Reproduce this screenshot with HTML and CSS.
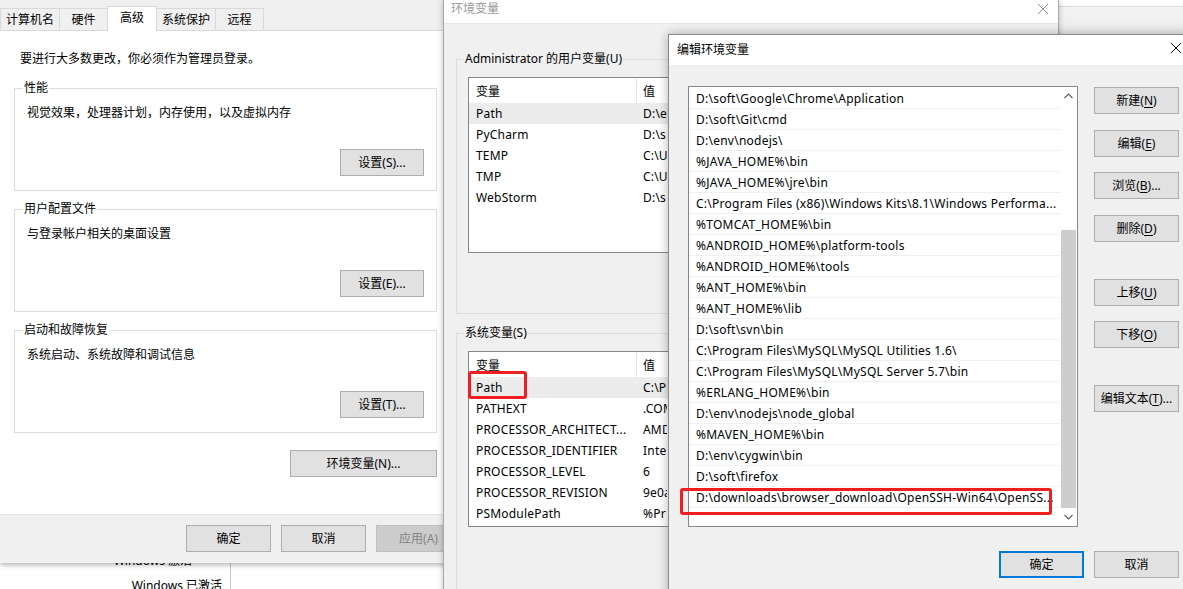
FILE: index.html
```html
<!DOCTYPE html>
<html lang="zh-CN">
<head>
<meta charset="utf-8">
<title>环境变量</title>
<link rel="stylesheet" href="styles.css">
</head>
<body>
<div class="desktop">

  <div class="backwin">
    <div class="backpane">
      <div class="act-title">Windows 激活</div>
      <div class="act-state">Windows 已激活</div>
    </div>
  </div>
  <div class="backstrip"></div>

  <section class="win sys">
    <div class="tabs">
      <div class="tab">计算机名</div>
      <div class="tab">硬件</div>
      <div class="tab active">高级</div>
      <div class="tab">系统保护</div>
      <div class="tab">远程</div>
    </div>
    <div class="panel">
      <div class="panel-inner">
        <p class="note">要进行大多数更改，你必须作为管理员登录。</p>
        <div class="group">
          <span class="legend">性能</span>
          <p class="desc">视觉效果，处理器计划，内存使用，以及虚拟内存</p>
          <button class="btn set">设置(S)...</button>
        </div>
        <div class="group">
          <span class="legend">用户配置文件</span>
          <p class="desc">与登录帐户相关的桌面设置</p>
          <button class="btn set">设置(E)...</button>
        </div>
        <div class="group">
          <span class="legend">启动和故障恢复</span>
          <p class="desc">系统启动、系统故障和调试信息</p>
          <button class="btn set">设置(T)...</button>
        </div>
        <button class="btn envbtn">环境变量(N)...</button>
      </div>
    </div>
    <div class="footer">
      <button class="btn">确定</button>
      <button class="btn">取消</button>
      <button class="btn disabled">应用(A)</button>
    </div>
  </section>

  <section class="win env">
    <div class="titlebar">
      <span class="title">环境变量</span>
      <span class="close"><svg width="10" height="10" viewBox="0 0 10 10"><path d="M0 0L10 10M10 0L0 10" stroke="#8a8a8a" stroke-width="1" fill="none"/></svg></span>
    </div>
    <div class="env-body">
      <div class="vgroup">
        <span class="legend">Administrator 的用户变量(U)</span>
        <div class="listview">
          <div class="lv-head"><span class="c1">变量</span><span class="c2">值</span></div>
          <div class="lv-row sel"><span class="c1">Path</span><span class="c2">D:\e</span></div>
          <div class="lv-row"><span class="c1">PyCharm</span><span class="c2">D:\s</span></div>
          <div class="lv-row"><span class="c1">TEMP</span><span class="c2">C:\U</span></div>
          <div class="lv-row"><span class="c1">TMP</span><span class="c2">C:\U</span></div>
          <div class="lv-row"><span class="c1">WebStorm</span><span class="c2">D:\s</span></div>
        </div>
      </div>
      <div class="vgroup second">
        <span class="legend">系统变量(S)</span>
        <div class="listview">
          <div class="lv-head"><span class="c1">变量</span><span class="c2">值</span></div>
          <div class="lv-row sel"><span class="c1">Path</span><span class="c2">C:\Pr</span></div>
          <div class="lv-row"><span class="c1">PATHEXT</span><span class="c2">.COM</span></div>
          <div class="lv-row"><span class="c1">PROCESSOR_ARCHITECT...</span><span class="c2">AMD</span></div>
          <div class="lv-row"><span class="c1">PROCESSOR_IDENTIFIER</span><span class="c2">Intel</span></div>
          <div class="lv-row"><span class="c1">PROCESSOR_LEVEL</span><span class="c2">6</span></div>
          <div class="lv-row"><span class="c1">PROCESSOR_REVISION</span><span class="c2">9e0a</span></div>
          <div class="lv-row"><span class="c1">PSModulePath</span><span class="c2">%Pr</span></div>
        </div>
      </div>
    </div>
  </section>

  <section class="win edit">
    <div class="titlebar">
      <span class="title">编辑环境变量</span>
      <span class="close"><svg width="10" height="10" viewBox="0 0 10 10"><path d="M0 0L10 10M10 0L0 10" stroke="#000" stroke-width="1" fill="none"/></svg></span>
    </div>
    <div class="edit-body">
      <div class="pathlist">
        <div class="items">
          <div class="item">D:\soft\Google\Chrome\Application</div>
          <div class="item">D:\soft\Git\cmd</div>
          <div class="item">D:\env\nodejs\</div>
          <div class="item">%JAVA_HOME%\bin</div>
          <div class="item">%JAVA_HOME%\jre\bin</div>
          <div class="item">C:\Program Files (x86)\Windows Kits\8.1\Windows Performa...</div>
          <div class="item">%TOMCAT_HOME%\bin</div>
          <div class="item">%ANDROID_HOME%\platform-tools</div>
          <div class="item">%ANDROID_HOME%\tools</div>
          <div class="item">%ANT_HOME%\bin</div>
          <div class="item">%ANT_HOME%\lib</div>
          <div class="item">D:\soft\svn\bin</div>
          <div class="item">C:\Program Files\MySQL\MySQL Utilities 1.6\</div>
          <div class="item">C:\Program Files\MySQL\MySQL Server 5.7\bin</div>
          <div class="item">%ERLANG_HOME%\bin</div>
          <div class="item">D:\env\nodejs\node_global</div>
          <div class="item">%MAVEN_HOME%\bin</div>
          <div class="item">D:\env\cygwin\bin</div>
          <div class="item">D:\soft\firefox</div>
          <div class="item">D:\downloads\browser_download\OpenSSH-Win64\OpenSS...</div>
        </div>
        <div class="vscroll">
          <div class="arrow"><svg width="9" height="6" viewBox="0 0 9 6"><polyline points="0.5,5 4.5,1 8.5,5" fill="none" stroke="#606060" stroke-width="1.2"/></svg></div>
          <div class="track"><div class="thumb"></div></div>
          <div class="arrow"><svg width="9" height="6" viewBox="0 0 9 6"><polyline points="0.5,1 4.5,5 8.5,1" fill="none" stroke="#606060" stroke-width="1.2"/></svg></div>
        </div>
      </div>
      <div class="side">
        <button class="btn">新建(<u>N</u>)</button>
        <button class="btn">编辑(<u>E</u>)</button>
        <button class="btn">浏览(<u>B</u>)...</button>
        <button class="btn">删除(<u>D</u>)</button>
        <button class="btn sep">上移(<u>U</u>)</button>
        <button class="btn">下移(<u>O</u>)</button>
        <button class="btn sep">编辑文本(<u>T</u>)...</button>
      </div>
      <div class="dlg-actions">
        <button class="btn default">确定</button>
        <button class="btn">取消</button>
      </div>
    </div>
  </section>

  <div class="mark mark-path"></div>
  <div class="mark mark-ssh"></div>
</div>
</body>
</html>
```

FILE: styles.css
```css
* { box-sizing: border-box; }
html, body { margin: 0; padding: 0; }
body {
  width: 1183px;
  height: 589px;
  overflow: hidden;
  background: #fff;
  font-family: "Noto Sans", "Noto Sans CJK SC", sans-serif;
  font-size: 12px;
  line-height: 16px;
  color: #000;
}
p { margin: 0; }

.desktop { position: relative; width: 1183px; height: 589px; overflow: hidden; }
.win { position: absolute; background: #f0f0f0; }

.btn {
  font: inherit;
  color: #000;
  background: #e1e1e1;
  border: 1px solid #adadad;
  height: 27px;
  width: 85px;
  padding: 1px 0 0;
  display: flex;
  align-items: center;
  justify-content: center;
  line-height: 16px;
  border-radius: 0;
  flex: none;
}
.btn u { text-decoration: underline; text-underline-offset: 2px; }
.btn.disabled { background: #cccccc; border-color: #bfbfbf; color: #838383; }
.btn.default { border: 2px solid #0078d7; }

/* background windows */
.backwin {
  position: absolute;
  left: 0; top: 548px;
  width: 443px; height: 50px;
  background: #fff;
}
.backpane {
  width: 231px; height: 100%;
  border-right: 1px solid #c8c8c8;
  padding-top: 5px;
  text-align: right;
}
.act-title { padding-right: 38px; }
.act-state { margin-top: 9px; padding-right: 8px; }
.backstrip {
  position: absolute;
  left: 1059px; top: 0;
  width: 124px; height: 34px;
  background: linear-gradient(#fff 0, #fff 6px, #dcdcdc 6px, #dcdcdc 7px, #f3f3f3 7px, #ececec 34px);
}

/* System properties window */
.sys {
  left: 0; top: 0;
  width: 470px; height: 563px;
  display: flex;
  flex-direction: column;
  z-index: 1;
  box-shadow: 0 2px 5px rgba(0,0,0,.3);
}
.tabs { display: flex; align-items: flex-end; height: 30px; flex: none; }
.tab {
  height: 22px;
  min-width: 49px;
  padding: 1px 5px 0;
  border: 1px solid #d9d9d9;
  border-bottom: none;
  margin-right: -1px;
  line-height: 19px;
  text-align: center;
  background: #f0f0f0;
}
.tab.active {
  height: 25px;
  background: #fff;
  margin: 0 -1px -1px 0;
  padding: 0 12px;
  line-height: 22px;
  position: relative;
  z-index: 1;
}
.panel {
  flex: 1;
  background: #fff;
  border-top: 1px solid #d9d9d9;
  padding-left: 14px;
}
.panel-inner { width: 423px; display: flex; flex-direction: column; }
.note { margin: 20px 0 0 6px; }
.group {
  margin-top: 18px;
  height: 103px;
  border: 1px solid #dcdcdc;
  display: flex;
  flex-direction: column;
  background: #fff;
}
.note + .group { margin-top: 21px; }
.legend {
  align-self: flex-start;
  margin: -9px 0 0 8px;
  padding: 0 1px;
  background: inherit;
}
.desc { margin: 9px 0 0 12px; }
.group .btn.set { margin: auto 12px 14px auto; width: 84px; }
.envbtn { margin-top: 17px; align-self: flex-end; width: 147px; }
.footer {
  height: 49px;
  flex: none;
  border-top: 1px solid #dfdfdf;
  display: flex;
  gap: 10px;
  padding: 10px 0 0 186px;
}

/* Environment variables window */
.env {
  left: 443px; top: 0;
  width: 616px; height: 640px;
  z-index: 2;
  border-left: 1px solid #a8a8a8;
  border-right: 1px solid #a8a8a8;
  box-shadow: 0 0 6px rgba(0,0,0,.25);
}
.env .titlebar {
  height: 24px;
  background: #fff;
  display: flex;
  align-items: flex-start;
  border-bottom: 1px solid #e6e6e6;
}
.env .title { padding: 1px 0 0 7px; color: #999; }
.env .close { margin-left: auto; width: 30px; height: 18px; display: flex; align-items: center; justify-content: center; }
.env-body { padding: 35px 0 0 12px; }
.vgroup {
  width: 590px;
  height: 255px;
  border: 1px solid #dcdcdc;
  padding: 0 11px;
  display: flex;
  flex-direction: column;
  background: #f0f0f0;
}
.vgroup .legend { margin-left: -4px; }
.vgroup.second { margin-top: 19px; height: 400px; }
.listview {
  margin-top: 10px;
  height: 176px;
  flex: none;
  border: 1px solid #828790;
  background: #fff;
}
.lv-head { height: 25px; display: flex; line-height: 23px; padding-top: 2px; }
.lv-head .c1 { border-right: 1px solid #e5e5e5; margin-top: -2px; padding-top: 2px; }
.lv-row { height: 21px; display: flex; line-height: 20px; padding-top: 1px; white-space: nowrap; letter-spacing: 0.2px; }
.lv-row.sel { background: #ececec; }
.c1 { width: 168px; padding-left: 7px; flex: none; overflow: hidden; white-space: nowrap; }
.c2 { padding-left: 6px; width: 30px; flex: none; overflow: hidden; white-space: nowrap; }

/* Edit environment variable window */
.edit {
  left: 668px; top: 34px;
  width: 532px; height: 600px;
  z-index: 3;
  border: 1px solid #8a8a8a;
  box-shadow: 0 0 10px rgba(0,0,0,.3);
}
.edit .titlebar { height: 30px; background: #fff; display: flex; padding-left: 8px; }
.edit .title { padding-top: 7px; }
.edit .close { margin-left: auto; width: 46px; padding-top: 8px; display: flex; justify-content: center; align-items: flex-start; }
.edit-body {
  display: grid;
  grid-template-columns: 390px 85px;
  column-gap: 16px;
  padding: 21px 0 0 19px;
  align-items: start;
}
.pathlist {
  height: 441px;
  border: 1px solid #828790;
  background: #fff;
  display: flex;
}
.items { flex: 1; min-width: 0; padding-top: 1px; overflow: hidden; }
.item {
  height: 21px;
  border-bottom: 1px solid #f0f0f0;
  padding: 1px 1px 0 7px;
  line-height: 19px;
  white-space: nowrap;
  overflow: hidden;
  text-overflow: ellipsis;
  letter-spacing: 0.25px;
}
.vscroll { width: 17px; flex: none; display: flex; flex-direction: column; background: #fff; }
.arrow { height: 18px; display: flex; align-items: center; justify-content: center; flex: none; }
.track { flex: 1; padding-top: 125px; }
.thumb { height: 278px; margin: 0 1px; background: #cdcdcd; }
.side { display: flex; flex-direction: column; gap: 15.67px; margin-top: 1px; }
.side .sep { margin-top: 21px; }
.dlg-actions {
  grid-column: 1 / -1;
  justify-self: end;
  display: flex;
  gap: 10px;
  margin-top: 24px;
}

/* annotation marks */
.mark { position: absolute; border: 3px solid #f01e1e; border-radius: 3px; z-index: 5; }
.mark-path { left: 468px; top: 371px; width: 59px; height: 28px; }
.mark-ssh { left: 680px; top: 488px; width: 372px; height: 27px; }
```
